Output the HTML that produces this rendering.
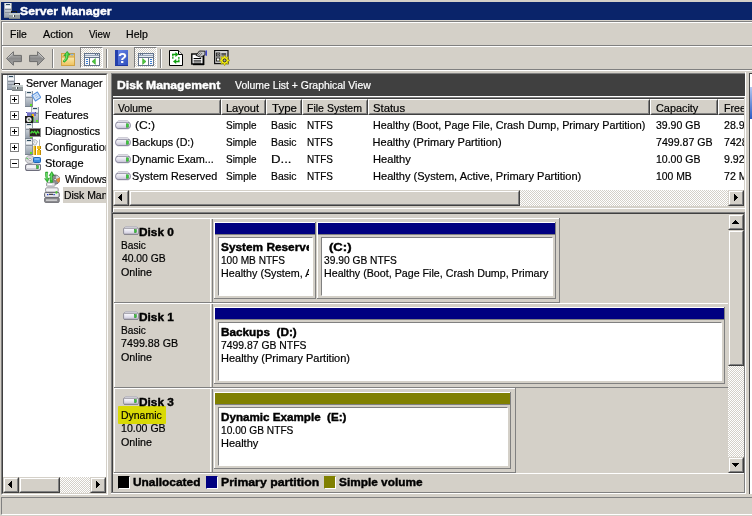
<!DOCTYPE html><html><head><meta charset="utf-8"><title>Server Manager</title><style>
html,body{margin:0;padding:0}
body{will-change:transform;width:752px;height:516px;overflow:hidden;background:#d4d0c8;position:relative;font-family:"Liberation Sans",sans-serif;font-size:11px;line-height:13px;color:#000}
div,span{position:absolute;box-sizing:border-box}
.t{white-space:pre;height:13px;line-height:13px;transform-origin:0 0;-webkit-text-stroke:0.2px currentColor}
.b{font-weight:bold;-webkit-text-stroke:0.4px currentColor}
.hl{background:#808080}.dk{background:#404040}.wh{background:#fff}
.raised{border:1px solid;border-color:#d4d0c8 #404040 #404040 #d4d0c8;background:#d4d0c8}
.raised:after{content:"";position:absolute;left:0;top:0;right:0;bottom:0;border:1px solid;border-color:#fff #808080 #808080 #fff}
.hdr{background:#d4d0c8;border:1px solid;border-color:#fff #404040 #404040 #fff;height:16px;top:99px}
.hdr:after{content:"";position:absolute;left:0;top:0;right:0;bottom:0;border:1px solid;border-color:#d4d0c8 #808080 #808080 #d4d0c8}
.dither{background-color:#fff;background-image:conic-gradient(#d4d0c8 25%,#fff 0 50%,#d4d0c8 0 75%,#fff 0);background-size:2px 2px}
</style></head><body><div style="left:1px;top:2px;width:751px;height:18px;background:#0a246a;"></div>
<span class="t b" style="left:19.9px;top:5px;transform:scaleX(1.108);color:#fff">Server Manager</span>
<svg style="position:absolute;left:4px;top:3px" width="16" height="16" viewBox="0 0 16 16" shape-rendering="crispEdges"><defs><linearGradient id="g1" x1="0" y1="0" x2="0" y2="1"><stop offset="0" stop-color="#e6eaee"/><stop offset="0.45" stop-color="#c3cad2"/><stop offset="1" stop-color="#8e99a6"/></linearGradient></defs><rect x="0" y="0" width="8" height="15" fill="url(#g1)"/><rect x="0" y="0" width="1" height="15" fill="#9aa3ad" opacity="0.8"/><rect x="7" y="0" width="1" height="15" fill="#7d8792" opacity="0.8"/><rect x="2" y="1" width="4" height="1" fill="#2c4a5c"/><rect x="1" y="3" width="6" height="2" fill="#f4f6f8"/><rect x="1" y="6" width="6" height="1" fill="#8a929c"/><rect x="0" y="14" width="8" height="1" fill="#78828e"/><rect x="1" y="9" width="6" height="1" fill="#8a929c"/><path d="M7.5 10 v-1.5 h5 v1.5" fill="none" stroke="#181818" stroke-width="1"/><rect x="5" y="10" width="11" height="6" fill="#949c9e"/><rect x="5" y="10" width="11" height="2" fill="#c2caca"/><rect x="5" y="15" width="11" height="1" fill="#7a8284"/><rect x="9" y="12" width="2" height="2" fill="#fff"/><rect x="10" y="12" width="1" height="2" fill="#3c4446"/></svg>
<div style="left:1px;top:21px;width:751px;height:1px;background:#808080;"></div>
<div style="left:1px;top:21px;width:1px;height:48px;background:#808080;"></div>
<div style="left:2px;top:22px;width:750px;height:1px;background:#fff;"></div>
<div style="left:2px;top:22px;width:1px;height:23px;background:#fff;"></div>
<div style="left:2px;top:47px;width:1px;height:22px;background:#fff;"></div>
<span class="t" style="left:9.7px;top:28px;transform:scaleX(0.950);">File</span>
<span class="t" style="left:43.0px;top:28px;transform:scaleX(0.983);">Action</span>
<span class="t" style="left:88.6px;top:28px;transform:scaleX(0.892);">View</span>
<span class="t" style="left:125.8px;top:28px;transform:scaleX(0.962);">Help</span>
<div style="left:2px;top:45px;width:750px;height:1px;background:#808080;"></div>
<div style="left:2px;top:46px;width:750px;height:1px;background:#fff;"></div>
<div style="left:2px;top:69px;width:750px;height:1px;background:#808080;"></div>
<div style="left:2px;top:70px;width:750px;height:1px;background:#fff;"></div>
<svg style="position:absolute;left:6px;top:51px" width="16" height="15" viewBox="0 0 16 15"><defs><linearGradient id="g2" x1="0" y1="0" x2="0" y2="1"><stop offset="0" stop-color="#c4c4c4"/><stop offset="0.5" stop-color="#8a8a8a"/><stop offset="1" stop-color="#a8a8a8"/></linearGradient></defs><g transform=""><path d="M0.6 7.5 L7.4 0.7 V4.4 H15.4 V10.6 H7.4 V14.3 Z" fill="url(#g2)" stroke="#6c6c6c" stroke-width="1" stroke-linejoin="round"/><path d="M1.8 7.3 L6.6 2.6" stroke="#d6d6d6" stroke-width="0.8"/></g></svg>
<svg style="position:absolute;left:29px;top:51px" width="16" height="15" viewBox="0 0 16 15"><defs><linearGradient id="g3" x1="0" y1="0" x2="0" y2="1"><stop offset="0" stop-color="#c4c4c4"/><stop offset="0.5" stop-color="#8a8a8a"/><stop offset="1" stop-color="#a8a8a8"/></linearGradient></defs><g transform="translate(16 0) scale(-1 1)"><path d="M0.6 7.5 L7.4 0.7 V4.4 H15.4 V10.6 H7.4 V14.3 Z" fill="url(#g3)" stroke="#6c6c6c" stroke-width="1" stroke-linejoin="round"/><path d="M1.8 7.3 L6.6 2.6" stroke="#d6d6d6" stroke-width="0.8"/></g></svg>
<div style="left:52px;top:49px;width:1px;height:19px;background:#808080;"></div>
<div style="left:53px;top:49px;width:1px;height:19px;background:#fff;"></div>
<svg style="position:absolute;left:61px;top:51px" width="15" height="16" viewBox="0 0 15 16"><defs><linearGradient id="g4" x1="0" y1="0" x2="0" y2="1"><stop offset="0" stop-color="#fae9b0"/><stop offset="1" stop-color="#efc25c"/></linearGradient></defs><rect x="0.5" y="2.5" width="13" height="12" fill="#ecca78" stroke="#cfa244"/><rect x="0.5" y="6" width="13" height="8.5" fill="url(#g4)" stroke="#cfa244"/><rect x="9.6" y="2.9" width="2.8" height="1.2" rx="0.6" fill="#9ccaf4" stroke="#4a86d0" stroke-width="0.4"/><path d="M2 10.2 C3.6 9.4 4.6 7.4 4.8 4.4 L2.8 4.8 L6.2 0.4 L9 4 L7.2 4 C7.2 7.6 5.8 9.8 3.2 11.2z" fill="#38cc38" stroke="#14961c" stroke-width="0.6"/><path d="M5.9 2 C6 5 5.4 8 3 10" stroke="#98f090" stroke-width="0.7" fill="none"/></svg>
<div class="dither" style="left:80px;top:47px;width:23px;height:21px;border:1px solid;border-color:#808080 #fff #fff #808080"></div>
<svg style="position:absolute;left:84px;top:53px" width="16" height="13" viewBox="0 0 16 13" shape-rendering="crispEdges"><g transform=""><rect x="0" y="0" width="16" height="13" fill="#64748c"/><rect x="1" y="1" width="14" height="1" fill="#dfe5ee"/><rect x="1" y="2" width="14" height="1" fill="#9aa8bc"/><rect x="11" y="1" width="1" height="1" fill="#64748c"/><rect x="13" y="1" width="1" height="1" fill="#64748c"/><rect x="1" y="3" width="14" height="1" fill="#e9edf3"/><rect x="1" y="5" width="4" height="7" fill="#f8fafc"/><rect x="6" y="5" width="9" height="7" fill="#ffffff"/><rect x="2" y="6" width="2" height="1" fill="#3a7ed6"/><rect x="2" y="8" width="2" height="1" fill="#3a7ed6"/><rect x="2" y="10" width="2" height="1" fill="#3a7ed6"/><path d="M11.4 5.6 L8 8.5 L11.4 11.4z" fill="#4cc83c" stroke="#2a9a22" stroke-width="0.5" shape-rendering="auto"/></g></svg>
<div style="left:106px;top:49px;width:1px;height:19px;background:#808080;"></div>
<div style="left:107px;top:49px;width:1px;height:19px;background:#fff;"></div>
<svg style="position:absolute;left:115px;top:50px" width="13" height="16" viewBox="0 0 13 16"><defs><linearGradient id="g5" x1="0" y1="0" x2="1" y2="1"><stop offset="0" stop-color="#6f8cec"/><stop offset="1" stop-color="#2c4cbc"/></linearGradient></defs><rect x="0" y="0" width="13" height="16" fill="url(#g5)"/><rect x="0" y="0" width="3" height="16" fill="#2440ac"/><rect x="0" y="15" width="13" height="1" fill="#2038a0"/><text x="8" y="13.4" font-family="Liberation Sans, sans-serif" font-size="14.5" font-weight="bold" fill="#8090c8" text-anchor="middle">?</text><text x="7.4" y="12.8" font-family="Liberation Sans, sans-serif" font-size="14.5" font-weight="bold" fill="#ffffff" text-anchor="middle">?</text></svg>
<div class="dither" style="left:134px;top:47px;width:23px;height:21px;border:1px solid;border-color:#808080 #fff #fff #808080"></div>
<svg style="position:absolute;left:138px;top:53px" width="16" height="13" viewBox="0 0 16 13" shape-rendering="crispEdges"><g transform="translate(16 0) scale(-1 1)"><rect x="0" y="0" width="16" height="13" fill="#64748c"/><rect x="1" y="1" width="14" height="1" fill="#dfe5ee"/><rect x="1" y="2" width="14" height="1" fill="#9aa8bc"/><rect x="11" y="1" width="1" height="1" fill="#64748c"/><rect x="13" y="1" width="1" height="1" fill="#64748c"/><rect x="1" y="3" width="14" height="1" fill="#e9edf3"/><rect x="1" y="5" width="4" height="7" fill="#f8fafc"/><rect x="6" y="5" width="9" height="7" fill="#ffffff"/><rect x="2" y="6" width="2" height="1" fill="#3a7ed6"/><rect x="2" y="8" width="2" height="1" fill="#3a7ed6"/><rect x="2" y="10" width="2" height="1" fill="#3a7ed6"/><path d="M11.4 5.6 L8 8.5 L11.4 11.4z" fill="#4cc83c" stroke="#2a9a22" stroke-width="0.5" shape-rendering="auto"/></g></svg>
<div style="left:160px;top:49px;width:1px;height:19px;background:#808080;"></div>
<div style="left:161px;top:49px;width:1px;height:19px;background:#fff;"></div>
<svg style="position:absolute;left:169px;top:50px" width="14" height="16" viewBox="0 0 14 16"><path d="M0.5 0.5 h9 l4 4 v11 h-13z" fill="#fff" stroke="#000"/><path d="M9.5 0.5 v4 h4" fill="#e8e8e8" stroke="#000"/><rect x="3" y="3.7" width="4" height="1.5" fill="#10a010"/><path d="M6.4 1.9 L9.6 4.4 L6.4 6.9z" fill="#10a010"/><rect x="3" y="5.2" width="1.6" height="1.2" fill="#10a010"/><rect x="3" y="7.2" width="1.6" height="1.4" fill="#10a010"/><rect x="7" y="10.8" width="3.6" height="1.5" fill="#10a010"/><path d="M7.2 9.1 L4 11.6 L7.2 14.1z" fill="#10a010"/><rect x="9" y="9.6" width="1.6" height="1.2" fill="#10a010"/><rect x="9" y="7.2" width="1.6" height="1.5" fill="#10a010"/></svg>
<svg style="position:absolute;left:191px;top:50px" width="16" height="16" viewBox="0 0 16 16"><rect x="0.8" y="4" width="11.4" height="10" fill="#fff" stroke="#000" stroke-width="1.4"/><rect x="12" y="6" width="1.4" height="9" fill="#000"/><rect x="2" y="14" width="11" height="1.2" fill="#000"/><rect x="2.6" y="8" width="7.6" height="1.1" fill="#000"/><rect x="2.6" y="10.4" width="7.6" height="1.1" fill="#000"/><rect x="2.6" y="12.6" width="7.6" height="0.9" fill="#000"/><path d="M5 5.4 L8.4 1 L14 1.2 L14 5 L9.6 7.2z" fill="#c6c6c6" stroke="#111" stroke-width="0.9"/><path d="M6.6 5.6 L9.4 2.4 M8.2 6.2 L11 3" stroke="#555" stroke-width="0.8"/><rect x="14.6" y="0.4" width="1.2" height="5.4" fill="#1c28d0"/></svg>
<svg style="position:absolute;left:214px;top:50px" width="17" height="16" viewBox="0 0 17 16"><rect x="0.6" y="0.6" width="13.4" height="13" fill="#c2c2c2" stroke="#111" stroke-width="1.2"/><rect x="1.4" y="1.4" width="11.8" height="1" fill="#efefef"/><rect x="2.4" y="3" width="3.4" height="3" fill="#fff" stroke="#111" stroke-width="0.8"/><path d="M3 3.6 l2.2 1.8 M5.2 3.6 l-2.2 1.8" stroke="#111" stroke-width="0.7"/><rect x="7.4" y="3.4" width="4.6" height="1.2" fill="#111"/><rect x="7.4" y="5.4" width="4.6" height="0.9" fill="#555"/><rect x="2.4" y="8" width="3.4" height="3" fill="#fff" stroke="#111" stroke-width="0.8"/><polygon points="10.60,5.00 11.86,7.35 14.42,6.58 13.65,9.14 16.00,10.40 13.65,11.66 14.42,14.22 11.86,13.45 10.60,15.80 9.34,13.45 6.78,14.22 7.55,11.66 5.20,10.40 7.55,9.14 6.78,6.58 9.34,7.35" fill="#f4ee10" stroke="#8a8200" stroke-width="0.5"/><circle cx="10.6" cy="10.4" r="1.5" fill="#b0b0a0" stroke="#222" stroke-width="1"/></svg>
<div style="left:1px;top:73px;width:107px;height:422px;background:#fff;border:1px solid;border-color:#808080 #fff #fff #808080"></div>
<div style="left:2px;top:74px;width:105px;height:420px;background:#fff;border:1px solid;border-color:#404040 #d4d0c8 #d4d0c8 #404040"></div>
<div style="left:3px;top:75px;width:103px;height:402px;overflow:hidden" id="tree">
<span class="t" style="left:23.0px;top:2px;transform:scaleX(0.971);">Server Manager</span>
<span class="t" style="left:42.1px;top:18px;transform:scaleX(0.937);">Roles</span>
<span class="t" style="left:42.0px;top:34px;transform:scaleX(1.000);">Features</span>
<span class="t" style="left:42.0px;top:50px;transform:scaleX(0.969);">Diagnostics</span>
<span class="t" style="left:42.0px;top:66px;transform:scaleX(1.010);">Configuration</span>
<span class="t" style="left:42.0px;top:82px;transform:scaleX(1.000);">Storage</span>
<span class="t" style="left:62.3px;top:98px;transform:scaleX(0.939);">Windows Server Backup</span>
<div style="left:60px;top:112px;width:60px;height:16px;background:#d4d0c8"></div>
<span class="t" style="left:61.4px;top:114px;transform:scaleX(0.948);">Disk Management</span>
</div>
<div style="left:10px;top:95px;width:9px;height:9px;border:1px solid #808080;background:#fff"></div>
<div style="left:12px;top:99px;width:5px;height:1px;background:#000;"></div>
<div style="left:14px;top:97px;width:1px;height:5px;background:#000;"></div>
<div style="left:10px;top:111px;width:9px;height:9px;border:1px solid #808080;background:#fff"></div>
<div style="left:12px;top:115px;width:5px;height:1px;background:#000;"></div>
<div style="left:14px;top:113px;width:1px;height:5px;background:#000;"></div>
<div style="left:10px;top:127px;width:9px;height:9px;border:1px solid #808080;background:#fff"></div>
<div style="left:12px;top:131px;width:5px;height:1px;background:#000;"></div>
<div style="left:14px;top:129px;width:1px;height:5px;background:#000;"></div>
<div style="left:10px;top:143px;width:9px;height:9px;border:1px solid #808080;background:#fff"></div>
<div style="left:12px;top:147px;width:5px;height:1px;background:#000;"></div>
<div style="left:14px;top:145px;width:1px;height:5px;background:#000;"></div>
<div style="left:10px;top:159px;width:9px;height:9px;border:1px solid #808080;background:#fff"></div>
<div style="left:12px;top:163px;width:5px;height:1px;background:#000;"></div>
<svg style="position:absolute;left:7px;top:75px" width="16" height="16" viewBox="0 0 16 16" shape-rendering="crispEdges"><defs><linearGradient id="g6" x1="0" y1="0" x2="0" y2="1"><stop offset="0" stop-color="#e6eaee"/><stop offset="0.45" stop-color="#c3cad2"/><stop offset="1" stop-color="#8e99a6"/></linearGradient></defs><rect x="0" y="0" width="8" height="15" fill="url(#g6)"/><rect x="0" y="0" width="1" height="15" fill="#9aa3ad" opacity="0.8"/><rect x="7" y="0" width="1" height="15" fill="#7d8792" opacity="0.8"/><rect x="2" y="1" width="4" height="1" fill="#2c4a5c"/><rect x="1" y="3" width="6" height="2" fill="#f4f6f8"/><rect x="1" y="6" width="6" height="1" fill="#8a929c"/><rect x="0" y="14" width="8" height="1" fill="#78828e"/><rect x="1" y="9" width="6" height="1" fill="#8a929c"/><path d="M7.5 10 v-1.5 h5 v1.5" fill="none" stroke="#181818" stroke-width="1"/><rect x="5" y="10" width="11" height="6" fill="#949c9e"/><rect x="5" y="10" width="11" height="2" fill="#c2caca"/><rect x="5" y="15" width="11" height="1" fill="#7a8284"/><rect x="9" y="12" width="2" height="2" fill="#fff"/><rect x="10" y="12" width="1" height="2" fill="#3c4446"/></svg>
<svg style="position:absolute;left:25px;top:91px" width="16" height="16" viewBox="0 0 16 16" shape-rendering="crispEdges"><defs><linearGradient id="g7" x1="0" y1="0" x2="0" y2="1"><stop offset="0" stop-color="#e6eaee"/><stop offset="0.45" stop-color="#c3cad2"/><stop offset="1" stop-color="#8e99a6"/></linearGradient></defs><rect x="0" y="0" width="8" height="16" fill="url(#g7)"/><rect x="0" y="0" width="1" height="16" fill="#9aa3ad" opacity="0.8"/><rect x="7" y="0" width="1" height="16" fill="#7d8792" opacity="0.8"/><rect x="2" y="1" width="4" height="1" fill="#2c4a5c"/><rect x="1" y="3" width="6" height="2" fill="#f4f6f8"/><rect x="1" y="6" width="6" height="1" fill="#8a929c"/><rect x="0" y="15" width="8" height="1" fill="#78828e"/><rect x="5" y="13" width="2" height="2" fill="#5ce020"/><g shape-rendering="auto"><path d="M7 4.4 L12.4 1 L15.8 6.4 L10.4 10 Z" fill="#d6e6fa" stroke="#5a92dc" stroke-width="1.1" stroke-linejoin="round"/><path d="M9.8 5.2 l2.6 -1.6 M10.8 6.8 l2.6 -1.6" stroke="#7aaae6" stroke-width="0.7"/></g></svg>
<svg style="position:absolute;left:25px;top:107px" width="16" height="16" viewBox="0 0 16 16" shape-rendering="crispEdges"><g transform="translate(6,0)"><defs><linearGradient id="g8" x1="0" y1="0" x2="0" y2="1"><stop offset="0" stop-color="#e6eaee"/><stop offset="0.45" stop-color="#c3cad2"/><stop offset="1" stop-color="#8e99a6"/></linearGradient></defs><rect x="0" y="0" width="8" height="16" fill="url(#g8)"/><rect x="0" y="0" width="1" height="16" fill="#9aa3ad" opacity="0.8"/><rect x="7" y="0" width="1" height="16" fill="#7d8792" opacity="0.8"/><rect x="2" y="1" width="4" height="1" fill="#2c4a5c"/><rect x="1" y="3" width="6" height="2" fill="#f4f6f8"/><rect x="1" y="6" width="6" height="1" fill="#8a929c"/><rect x="0" y="15" width="8" height="1" fill="#78828e"/><rect x="5" y="13" width="2" height="2" fill="#5ce020"/></g><rect x="2" y="5" width="9" height="4" fill="#7474c4"/><rect x="2" y="5" width="9" height="1" fill="#9a9ade"/><rect x="1" y="5" width="1" height="1" fill="#4a4aa0"/><rect x="10" y="5" width="1" height="1" fill="#4a4aa0"/><rect x="6" y="7" width="3" height="8" fill="#58a058"/><rect x="7" y="7" width="2" height="3" fill="#f0b020"/><rect x="0" y="9" width="8" height="7" fill="#1c1c1c"/><g shape-rendering="auto"><circle cx="4" cy="12.5" r="2.6" fill="#e8e8e8"/><circle cx="4" cy="12.5" r="0.9" fill="#555"/><path d="M4 12.5 L6.4 13.6 A2.6 2.6 0 0 1 4.5 15z" fill="#9ad08a"/></g></svg>
<svg style="position:absolute;left:25px;top:123px" width="16" height="16" viewBox="0 0 16 16" shape-rendering="crispEdges"><defs><linearGradient id="g9" x1="0" y1="0" x2="0" y2="1"><stop offset="0" stop-color="#e6eaee"/><stop offset="0.45" stop-color="#c3cad2"/><stop offset="1" stop-color="#8e99a6"/></linearGradient></defs><rect x="0" y="0" width="8" height="16" fill="url(#g9)"/><rect x="0" y="0" width="1" height="16" fill="#9aa3ad" opacity="0.8"/><rect x="7" y="0" width="1" height="16" fill="#7d8792" opacity="0.8"/><rect x="2" y="1" width="4" height="1" fill="#2c4a5c"/><rect x="1" y="3" width="6" height="2" fill="#f4f6f8"/><rect x="1" y="6" width="6" height="1" fill="#8a929c"/><rect x="0" y="15" width="8" height="1" fill="#78828e"/><rect x="5" y="13" width="2" height="2" fill="#5ce020"/><rect x="4" y="5" width="12" height="9" fill="#8e8e8e"/><rect x="5" y="6" width="10" height="7" fill="#2a2020"/><g shape-rendering="auto"><path d="M5.5 10.5 l1.5 -2 l1.5 1.2 l1.3 -1.4 l1.4 2.6 l1.4 -2.6 l1.6 2" fill="none" stroke="#48d838" stroke-width="1.3"/></g><rect x="5" y="14" width="2" height="1" fill="#5ce020"/></svg>
<svg style="position:absolute;left:25px;top:139px" width="16" height="16" viewBox="0 0 16 16" shape-rendering="crispEdges"><defs><linearGradient id="g10" x1="0" y1="0" x2="0" y2="1"><stop offset="0" stop-color="#e6eaee"/><stop offset="0.45" stop-color="#c3cad2"/><stop offset="1" stop-color="#8e99a6"/></linearGradient></defs><rect x="0" y="0" width="8" height="16" fill="url(#g10)"/><rect x="0" y="0" width="1" height="16" fill="#9aa3ad" opacity="0.8"/><rect x="7" y="0" width="1" height="16" fill="#7d8792" opacity="0.8"/><rect x="2" y="1" width="4" height="1" fill="#2c4a5c"/><rect x="1" y="3" width="6" height="2" fill="#f4f6f8"/><rect x="1" y="6" width="6" height="1" fill="#8a929c"/><rect x="0" y="15" width="8" height="1" fill="#78828e"/><rect x="5" y="13" width="2" height="2" fill="#5ce020"/><g shape-rendering="auto"><path d="M7.5 1.2 q3 -1.6 5 1.2 l-1.6 3.6 l-2 0.2 l-0.8 -1.6 l1.6 -1.4 q-1 -1.2 -2.2 -2z" fill="#eceff2" stroke="#9aa2aa" stroke-width="0.7"/><rect x="14" y="0.5" width="1" height="7" fill="#a8b0b8"/></g><rect x="8" y="7" width="3" height="9" fill="#f2c21c"/><rect x="10" y="7" width="1" height="9" fill="#c08a00"/><rect x="8" y="7" width="1" height="9" fill="#fbe27a"/><rect x="12" y="7" width="4" height="3" fill="#f2c21c"/><rect x="13" y="10" width="2" height="1" fill="#d09a00"/><rect x="12" y="11" width="4" height="5" fill="#f2c21c"/><rect x="15" y="7" width="1" height="3" fill="#c08a00"/><rect x="15" y="11" width="1" height="5" fill="#c08a00"/></svg>
<svg style="position:absolute;left:25px;top:155px" width="16" height="16" viewBox="0 0 16 16"><ellipse cx="5" cy="4.5" rx="4.6" ry="4" fill="#d8d8dc" stroke="#9a9aa2" stroke-width="0.8"/><ellipse cx="5" cy="4.5" rx="1.3" ry="1.1" fill="#fff" stroke="#888" stroke-width="0.5"/><path d="M1.2 3 l2 1" stroke="#4cc84c" stroke-width="1"/><rect x="8.5" y="2.5" width="7" height="5" rx="0.8" fill="#3a8fe2" stroke="#1e62b4"/><rect x="9.5" y="3.3" width="5" height="1.4" fill="#8cc4f6"/><rect x="0.6" y="9.2" width="15" height="6.2" rx="2" fill="#f0f0f4" stroke="#6e6e7c" stroke-width="1.1"/><rect x="2" y="13.4" width="12" height="1" fill="#b8b8c4"/><rect x="11.6" y="10.6" width="1.8" height="3" fill="#3cc43c" stroke="#207820" stroke-width="0.5"/></svg>
<svg style="position:absolute;left:44px;top:171px" width="16" height="16" viewBox="0 0 16 16"><circle cx="11.2" cy="8.6" r="4.6" fill="#8e8e92" stroke="#55555a" stroke-width="0.8"/><path d="M11.2 8.6 L15.4 6.6 A4.6 4.6 0 0 1 14.6 11.8z" fill="#e08a3a"/><path d="M11.2 8.6 L12.6 4.2 A4.6 4.6 0 0 1 15.4 6.6z" fill="#d8d8dc"/><circle cx="11.2" cy="8.6" r="1.2" fill="#eee" stroke="#444" stroke-width="0.5"/><rect x="2.5" y="11.6" width="8.5" height="3.6" rx="0.8" fill="#e4e4e8" stroke="#8a8a92" stroke-width="0.8"/><rect x="4" y="13" width="4" height="1" fill="#fff"/><path d="M1.6 1 C1.2 4 1.6 6 2.4 8 L0.6 7.6 L3.4 11.4 L5.4 7 L3.9 7.6 C3.2 5.6 3.2 3.4 3.8 1z" fill="#34c034" stroke="#168a16" stroke-width="0.5"/><path d="M6.4 11.6 C5.6 8.6 6 6.2 6.8 4.2 L5 4.8 L7.8 0.6 L10.2 4.6 L8.6 4.2 C8 6.2 8 8.6 8.8 11.2z" fill="#34c034" stroke="#168a16" stroke-width="0.5"/><path d="M7.4 2.4 L7.2 9" stroke="#8cf08c" stroke-width="0.7"/><path d="M2.6 2 L3 8.6" stroke="#8cf08c" stroke-width="0.7"/></svg>
<svg style="position:absolute;left:44px;top:187px" width="16" height="16" viewBox="0 0 16 16"><rect x="1.6" y="0.8" width="12.6" height="4.4" rx="1.2" fill="#f2f2f4" stroke="#8e8e96" stroke-width="0.9"/><rect x="0.6" y="5.4" width="14.6" height="5" rx="1.2" fill="#e6e6ea" stroke="#62626c" stroke-width="1"/><rect x="3" y="7" width="1.4" height="1.2" fill="#2038c8"/><rect x="9.4" y="7" width="1.4" height="1.2" fill="#2038c8"/><rect x="5" y="6.8" width="4" height="1" fill="#222"/><rect x="11.6" y="4.2" width="1.6" height="2.4" fill="#48d028"/><rect x="0.6" y="10.8" width="14.6" height="4.6" rx="1" fill="#8e8e92" stroke="#6a6a70" stroke-width="0.9"/><rect x="2" y="12.6" width="11" height="1" fill="#f4f4f4"/></svg>
<div class="dither" style="left:3px;top:477px;width:103px;height:16px"></div>
<div class="raised" style="left:3px;top:477px;width:16px;height:16px"></div>
<div style="left:8px;top:484px;width:1px;height:1px;background:#000;"></div>
<div style="left:9px;top:483px;width:1px;height:3px;background:#000;"></div>
<div style="left:10px;top:482px;width:1px;height:5px;background:#000;"></div>
<div style="left:11px;top:481px;width:1px;height:7px;background:#000;"></div>
<div class="raised" style="left:90px;top:477px;width:16px;height:16px"></div>
<div style="left:99px;top:484px;width:1px;height:1px;background:#000;"></div>
<div style="left:98px;top:483px;width:1px;height:3px;background:#000;"></div>
<div style="left:97px;top:482px;width:1px;height:5px;background:#000;"></div>
<div style="left:96px;top:481px;width:1px;height:7px;background:#000;"></div>
<div class="raised" style="left:19px;top:477px;width:41px;height:16px"></div>
<div style="left:111px;top:73px;width:634px;height:23px;background:#404040;border-left:1px solid #808080;border-top:1px solid #808080"></div>
<span class="t b" style="left:116.6px;top:79px;transform:scaleX(1.105);color:#fff">Disk Management</span>
<span class="t" style="left:235.4px;top:79px;transform:scaleX(0.948);color:#fff">Volume List + Graphical View</span>
<div style="left:745px;top:72px;width:1px;height:422px;background:#fff;"></div>
<div style="left:112px;top:96px;width:633px;height:1px;background:#fff;"></div>
<div style="left:111px;top:97px;width:634px;height:110px;background:#fff;border:1px solid;border-color:#808080 #d4d0c8 #d4d0c8 #808080"></div>
<div style="left:112px;top:98px;width:1px;height:108px;background:#404040;"></div>
<div style="left:113px;top:98px;width:631px;height:1px;background:#404040;"></div>
<div style="left:113px;top:99px;width:631px;height:91px;overflow:hidden;background:#fff" id="list">
<div class="hdr" style="left:0px;top:0;width:108px"></div>
<span class="t" style="left:5.4px;top:3px;transform:scaleX(0.933);">Volume</span>
<div class="hdr" style="left:108px;top:0;width:45px"></div>
<span class="t" style="left:113.0px;top:3px;transform:scaleX(1.000);">Layout</span>
<div class="hdr" style="left:153px;top:0;width:36px"></div>
<span class="t" style="left:158.6px;top:3px;transform:scaleX(1.045);">Type</span>
<div class="hdr" style="left:189px;top:0;width:66px"></div>
<span class="t" style="left:194.0px;top:3px;transform:scaleX(0.957);">File System</span>
<div class="hdr" style="left:255px;top:0;width:282px"></div>
<span class="t" style="left:259.6px;top:3px;transform:scaleX(1.027);">Status</span>
<div class="hdr" style="left:537px;top:0;width:68px"></div>
<span class="t" style="left:543.0px;top:3px;transform:scaleX(0.988);">Capacity</span>
<div class="hdr" style="left:605px;top:0;width:82px"></div>
<span class="t" style="left:610.5px;top:3px;transform:scaleX(0.965);">Free Space</span>
<span class="t" style="left:21.7px;top:20px;transform:scaleX(1.094);">(C:)</span>
<span class="t" style="left:113.1px;top:20px;transform:scaleX(0.906);">Simple</span>
<span class="t" style="left:158.1px;top:20px;transform:scaleX(0.944);">Basic</span>
<span class="t" style="left:194.1px;top:20px;transform:scaleX(0.904);">NTFS</span>
<span class="t" style="left:259.8px;top:20px;transform:scaleX(0.979);">Healthy (Boot, Page File, Crash Dump, Primary Partition)</span>
<span class="t" style="left:543.0px;top:20px;transform:scaleX(0.956);">39.90 GB</span>
<span class="t" style="left:610.5px;top:20px;transform:scaleX(0.965);">28.97 GB</span>
<svg style="position:absolute;left:2px;top:21px" width="16" height="10" viewBox="0 0 16 10"><defs><linearGradient id="g11" x1="0" y1="0" x2="0" y2="1"><stop offset="0" stop-color="#fbfbfd"/><stop offset="0.55" stop-color="#e2e0ec"/><stop offset="1" stop-color="#c2c0d2"/></linearGradient></defs><path d="M3.4 0.5 h9.2 l2.4 2.4 h-14z" fill="#f1f1f6" stroke="#b4b2c0" stroke-width="0.6"/><rect x="0.6" y="2.3" width="14.8" height="6.2" rx="2.6" fill="url(#g11)" stroke="#84829a" stroke-width="0.9"/><rect x="2.4" y="8.5" width="11.2" height="0.8" fill="#8a889c" opacity="0.6"/><rect x="11.4" y="3.8" width="2" height="3.4" fill="#38d038" stroke="#1e8a1e" stroke-width="0.5"/></svg>
<span class="t" style="left:19.2px;top:37px;transform:scaleX(0.974);">Backups (D:)</span>
<span class="t" style="left:113.1px;top:37px;transform:scaleX(0.906);">Simple</span>
<span class="t" style="left:158.1px;top:37px;transform:scaleX(0.944);">Basic</span>
<span class="t" style="left:194.1px;top:37px;transform:scaleX(0.904);">NTFS</span>
<span class="t" style="left:259.6px;top:37px;transform:scaleX(1.000);">Healthy (Primary Partition)</span>
<span class="t" style="left:543.0px;top:37px;transform:scaleX(0.965);">7499.87 GB</span>
<span class="t" style="left:610.5px;top:37px;transform:scaleX(0.965);">7428.63 GB</span>
<svg style="position:absolute;left:2px;top:38px" width="16" height="10" viewBox="0 0 16 10"><defs><linearGradient id="g12" x1="0" y1="0" x2="0" y2="1"><stop offset="0" stop-color="#fbfbfd"/><stop offset="0.55" stop-color="#e2e0ec"/><stop offset="1" stop-color="#c2c0d2"/></linearGradient></defs><path d="M3.4 0.5 h9.2 l2.4 2.4 h-14z" fill="#f1f1f6" stroke="#b4b2c0" stroke-width="0.6"/><rect x="0.6" y="2.3" width="14.8" height="6.2" rx="2.6" fill="url(#g12)" stroke="#84829a" stroke-width="0.9"/><rect x="2.4" y="8.5" width="11.2" height="0.8" fill="#8a889c" opacity="0.6"/><rect x="11.4" y="3.8" width="2" height="3.4" fill="#38d038" stroke="#1e8a1e" stroke-width="0.5"/></svg>
<span class="t" style="left:19.2px;top:54px;transform:scaleX(0.985);">Dynamic Exam...</span>
<span class="t" style="left:113.1px;top:54px;transform:scaleX(0.906);">Simple</span>
<span class="t" style="left:157.8px;top:54px;transform:scaleX(1.200);">D...</span>
<span class="t" style="left:194.1px;top:54px;transform:scaleX(0.904);">NTFS</span>
<span class="t" style="left:259.6px;top:54px;transform:scaleX(1.011);">Healthy</span>
<span class="t" style="left:543.0px;top:54px;transform:scaleX(0.956);">10.00 GB</span>
<span class="t" style="left:610.5px;top:54px;transform:scaleX(0.965);">9.92 GB</span>
<svg style="position:absolute;left:2px;top:55px" width="16" height="10" viewBox="0 0 16 10"><defs><linearGradient id="g13" x1="0" y1="0" x2="0" y2="1"><stop offset="0" stop-color="#fbfbfd"/><stop offset="0.55" stop-color="#e2e0ec"/><stop offset="1" stop-color="#c2c0d2"/></linearGradient></defs><path d="M3.4 0.5 h9.2 l2.4 2.4 h-14z" fill="#f1f1f6" stroke="#b4b2c0" stroke-width="0.6"/><rect x="0.6" y="2.3" width="14.8" height="6.2" rx="2.6" fill="url(#g13)" stroke="#84829a" stroke-width="0.9"/><rect x="2.4" y="8.5" width="11.2" height="0.8" fill="#8a889c" opacity="0.6"/><rect x="11.4" y="3.8" width="2" height="3.4" fill="#38d038" stroke="#1e8a1e" stroke-width="0.5"/></svg>
<span class="t" style="left:19.2px;top:71px;transform:scaleX(0.981);">System Reserved</span>
<span class="t" style="left:113.1px;top:71px;transform:scaleX(0.906);">Simple</span>
<span class="t" style="left:158.1px;top:71px;transform:scaleX(0.944);">Basic</span>
<span class="t" style="left:194.1px;top:71px;transform:scaleX(0.904);">NTFS</span>
<span class="t" style="left:259.6px;top:71px;transform:scaleX(1.005);">Healthy (System, Active, Primary Partition)</span>
<span class="t" style="left:543.1px;top:71px;transform:scaleX(0.944);">100 MB</span>
<span class="t" style="left:610.5px;top:71px;transform:scaleX(0.965);">72 MB</span>
<svg style="position:absolute;left:2px;top:72px" width="16" height="10" viewBox="0 0 16 10"><defs><linearGradient id="g14" x1="0" y1="0" x2="0" y2="1"><stop offset="0" stop-color="#fbfbfd"/><stop offset="0.55" stop-color="#e2e0ec"/><stop offset="1" stop-color="#c2c0d2"/></linearGradient></defs><path d="M3.4 0.5 h9.2 l2.4 2.4 h-14z" fill="#f1f1f6" stroke="#b4b2c0" stroke-width="0.6"/><rect x="0.6" y="2.3" width="14.8" height="6.2" rx="2.6" fill="url(#g14)" stroke="#84829a" stroke-width="0.9"/><rect x="2.4" y="8.5" width="11.2" height="0.8" fill="#8a889c" opacity="0.6"/><rect x="11.4" y="3.8" width="2" height="3.4" fill="#38d038" stroke="#1e8a1e" stroke-width="0.5"/></svg>
</div>
<div class="dither" style="left:113px;top:190px;width:631px;height:16px"></div>
<div class="raised" style="left:113px;top:190px;width:16px;height:16px"></div>
<div style="left:118px;top:197px;width:1px;height:1px;background:#000;"></div>
<div style="left:119px;top:196px;width:1px;height:3px;background:#000;"></div>
<div style="left:120px;top:195px;width:1px;height:5px;background:#000;"></div>
<div style="left:121px;top:194px;width:1px;height:7px;background:#000;"></div>
<div class="raised" style="left:728px;top:190px;width:16px;height:16px"></div>
<div style="left:737px;top:197px;width:1px;height:1px;background:#000;"></div>
<div style="left:736px;top:196px;width:1px;height:3px;background:#000;"></div>
<div style="left:735px;top:195px;width:1px;height:5px;background:#000;"></div>
<div style="left:734px;top:194px;width:1px;height:7px;background:#000;"></div>
<div class="raised" style="left:129px;top:190px;width:391px;height:16px"></div>
<div style="left:111px;top:73px;width:1px;height:420px;background:#808080;"></div>
<div style="left:112px;top:74px;width:1px;height:419px;background:#404040;"></div>
<div style="left:113px;top:208px;width:632px;height:1px;background:#fff;"></div>
<div style="left:113px;top:208px;width:1px;height:4px;background:#fff;"></div>
<div style="left:111px;top:212px;width:634px;height:281px;background:#d4d0c8;border:1px solid;border-color:#808080 #808080 #808080 #808080"></div>
<div style="left:112px;top:213px;width:632px;height:1px;background:#404040;"></div>
<div style="left:112px;top:213px;width:1px;height:279px;background:#404040;"></div>
<div style="left:111px;top:493px;width:635px;height:1px;background:#fff;"></div>
<div style="left:114px;top:218px;width:445px;height:1px;background:#fff;"></div>
<div style="left:114px;top:218px;width:1px;height:84px;background:#fff;"></div>
<div style="left:114px;top:302px;width:446px;height:1px;background:#808080;"></div>
<div style="left:559px;top:218px;width:1px;height:85px;background:#808080;"></div>
<div style="left:210px;top:219px;width:1px;height:83px;background:#fff;"></div>
<div style="left:212px;top:219px;width:1px;height:83px;background:#808080;"></div>
<svg style="position:absolute;left:123px;top:226px" width="16" height="9" viewBox="0 0 16 9"><defs><linearGradient id="g15" x1="0" y1="0" x2="0" y2="1"><stop offset="0" stop-color="#ffffff"/><stop offset="0.5" stop-color="#e6e4f0"/><stop offset="1" stop-color="#cac8d8"/></linearGradient></defs><path d="M2.5 0.6 h11 l1.8 2 h-14.6z" fill="#efeff5" stroke="#9a98a6" stroke-width="0.6"/><rect x="0.6" y="2.2" width="14.8" height="6" rx="0.8" fill="url(#g15)" stroke="#84828e" stroke-width="0.9"/><rect x="1" y="8.3" width="14" height="0.7" fill="#76747e" opacity="0.8"/><rect x="11.5" y="3.6" width="1.8" height="3" fill="#38c838" stroke="#1e7e1e" stroke-width="0.5"/></svg>
<span class="t b" style="left:138.9px;top:226px;transform:scaleX(1.074);">Disk 0</span>
<span class="t" style="left:121.1px;top:239px;transform:scaleX(0.920);">Basic</span>
<span class="t" style="left:122.0px;top:252px;transform:scaleX(0.940);">40.00 GB</span>
<span class="t" style="left:121.0px;top:266px;transform:scaleX(0.975);">Online</span>
<div style="left:214px;top:222px;width:101px;height:1px;background:#fff;"></div>
<div style="left:214px;top:222px;width:1px;height:76px;background:#fff;"></div>
<div style="left:215px;top:223px;width:100px;height:11px;background:#000080;"></div>
<div style="left:215px;top:234px;width:100px;height:1px;background:#808080;"></div>
<div style="left:315px;top:222px;width:1px;height:77px;background:#808080;"></div>
<div style="left:214px;top:298px;width:102px;height:1px;background:#808080;"></div>
<div style="left:218px;top:237px;width:95px;height:59px;background:#fff;border:1px solid;border-color:#808080 #fff #fff #808080;overflow:hidden"></div>
<div style="left:219px;top:238px;width:90px;height:57px;overflow:hidden">
<span class="t b" style="left:2.2px;top:3px;transform:scaleX(1.076);">System Reserved</span>
<span class="t" style="left:2.1px;top:16px;transform:scaleX(0.919);">100 MB NTFS</span>
<span class="t" style="left:2.3px;top:29px;transform:scaleX(0.976);">Healthy (System, Active, Primary Partition)</span>
</div>
<div style="left:317px;top:222px;width:238px;height:1px;background:#fff;"></div>
<div style="left:317px;top:222px;width:1px;height:76px;background:#fff;"></div>
<div style="left:318px;top:223px;width:237px;height:11px;background:#000080;"></div>
<div style="left:318px;top:234px;width:237px;height:1px;background:#808080;"></div>
<div style="left:555px;top:222px;width:1px;height:77px;background:#808080;"></div>
<div style="left:317px;top:298px;width:239px;height:1px;background:#808080;"></div>
<div style="left:321px;top:237px;width:232px;height:59px;background:#fff;border:1px solid;border-color:#808080 #fff #fff #808080;overflow:hidden"></div>
<div style="left:322px;top:238px;width:227px;height:57px;overflow:hidden">
<span class="t b" style="left:7.4px;top:3px;transform:scaleX(1.188);">(C:)</span>
<span class="t" style="left:1.7px;top:16px;transform:scaleX(0.931);">39.90 GB NTFS</span>
<span class="t" style="left:1.6px;top:29px;transform:scaleX(0.971);">Healthy (Boot, Page File, Crash Dump, Primary</span>
</div>
<div style="left:114px;top:303px;width:614px;height:1px;background:#fff;"></div>
<div style="left:114px;top:303px;width:1px;height:84px;background:#fff;"></div>
<div style="left:114px;top:387px;width:615px;height:1px;background:#808080;"></div>
<div style="left:728px;top:303px;width:1px;height:85px;background:#808080;"></div>
<div style="left:210px;top:304px;width:1px;height:83px;background:#fff;"></div>
<div style="left:212px;top:304px;width:1px;height:83px;background:#808080;"></div>
<svg style="position:absolute;left:123px;top:311px" width="16" height="9" viewBox="0 0 16 9"><defs><linearGradient id="g16" x1="0" y1="0" x2="0" y2="1"><stop offset="0" stop-color="#ffffff"/><stop offset="0.5" stop-color="#e6e4f0"/><stop offset="1" stop-color="#cac8d8"/></linearGradient></defs><path d="M2.5 0.6 h11 l1.8 2 h-14.6z" fill="#efeff5" stroke="#9a98a6" stroke-width="0.6"/><rect x="0.6" y="2.2" width="14.8" height="6" rx="0.8" fill="url(#g16)" stroke="#84828e" stroke-width="0.9"/><rect x="1" y="8.3" width="14" height="0.7" fill="#76747e" opacity="0.8"/><rect x="11.5" y="3.6" width="1.8" height="3" fill="#38c838" stroke="#1e7e1e" stroke-width="0.5"/></svg>
<span class="t b" style="left:138.9px;top:311px;transform:scaleX(1.074);">Disk 1</span>
<span class="t" style="left:121.1px;top:324px;transform:scaleX(0.920);">Basic</span>
<span class="t" style="left:121.0px;top:337px;transform:scaleX(0.974);">7499.88 GB</span>
<span class="t" style="left:121.0px;top:351px;transform:scaleX(0.975);">Online</span>
<div style="left:214px;top:307px;width:510px;height:1px;background:#fff;"></div>
<div style="left:214px;top:307px;width:1px;height:76px;background:#fff;"></div>
<div style="left:215px;top:308px;width:509px;height:11px;background:#000080;"></div>
<div style="left:215px;top:319px;width:509px;height:1px;background:#808080;"></div>
<div style="left:724px;top:307px;width:1px;height:77px;background:#808080;"></div>
<div style="left:214px;top:383px;width:511px;height:1px;background:#808080;"></div>
<div style="left:218px;top:322px;width:504px;height:59px;background:#fff;border:1px solid;border-color:#808080 #fff #fff #808080;overflow:hidden"></div>
<div style="left:219px;top:323px;width:499px;height:57px;overflow:hidden">
<span class="t b" style="left:1.9px;top:3px;transform:scaleX(1.069);">Backups  (D:)</span>
<span class="t" style="left:2.1px;top:16px;transform:scaleX(0.944);">7499.87 GB NTFS</span>
<span class="t" style="left:2.0px;top:29px;transform:scaleX(1.000);">Healthy (Primary Partition)</span>
</div>
<div style="left:114px;top:388px;width:401px;height:1px;background:#fff;"></div>
<div style="left:114px;top:388px;width:1px;height:84px;background:#fff;"></div>
<div style="left:114px;top:472px;width:402px;height:1px;background:#808080;"></div>
<div style="left:515px;top:388px;width:1px;height:85px;background:#808080;"></div>
<div style="left:210px;top:389px;width:1px;height:83px;background:#fff;"></div>
<div style="left:212px;top:389px;width:1px;height:83px;background:#808080;"></div>
<svg style="position:absolute;left:123px;top:396px" width="16" height="9" viewBox="0 0 16 9"><defs><linearGradient id="g17" x1="0" y1="0" x2="0" y2="1"><stop offset="0" stop-color="#ffffff"/><stop offset="0.5" stop-color="#e6e4f0"/><stop offset="1" stop-color="#cac8d8"/></linearGradient></defs><path d="M2.5 0.6 h11 l1.8 2 h-14.6z" fill="#efeff5" stroke="#9a98a6" stroke-width="0.6"/><rect x="0.6" y="2.2" width="14.8" height="6" rx="0.8" fill="url(#g17)" stroke="#84828e" stroke-width="0.9"/><rect x="1" y="8.3" width="14" height="0.7" fill="#76747e" opacity="0.8"/><rect x="11.5" y="3.6" width="1.8" height="3" fill="#38c838" stroke="#1e7e1e" stroke-width="0.5"/></svg>
<div style="left:118px;top:406px;width:48px;height:18px;background:#d9d906;border-radius:1px"></div>
<span class="t b" style="left:138.9px;top:396px;transform:scaleX(1.074);">Disk 3</span>
<span class="t" style="left:121.0px;top:409px;transform:scaleX(0.951);">Dynamic</span>
<span class="t" style="left:121.0px;top:422px;transform:scaleX(0.961);">10.00 GB</span>
<span class="t" style="left:121.0px;top:436px;transform:scaleX(0.975);">Online</span>
<div style="left:214px;top:392px;width:296px;height:1px;background:#fff;"></div>
<div style="left:214px;top:392px;width:1px;height:76px;background:#fff;"></div>
<div style="left:215px;top:393px;width:295px;height:11px;background:#808000;"></div>
<div style="left:215px;top:404px;width:295px;height:1px;background:#808080;"></div>
<div style="left:510px;top:392px;width:1px;height:77px;background:#808080;"></div>
<div style="left:214px;top:468px;width:297px;height:1px;background:#808080;"></div>
<div style="left:218px;top:407px;width:290px;height:59px;background:#fff;border:1px solid;border-color:#808080 #fff #fff #808080;overflow:hidden"></div>
<div style="left:219px;top:408px;width:285px;height:57px;overflow:hidden">
<span class="t b" style="left:1.9px;top:3px;transform:scaleX(1.058);">Dynamic Example  (E:)</span>
<span class="t" style="left:2.1px;top:16px;transform:scaleX(0.925);">10.00 GB NTFS</span>
<span class="t" style="left:2.0px;top:29px;transform:scaleX(1.000);">Healthy</span>
</div>
<div class="dither" style="left:728px;top:214px;width:16px;height:259px"></div>
<div class="raised" style="left:728px;top:214px;width:16px;height:16px"></div>
<div style="left:735px;top:220px;width:1px;height:1px;background:#000;"></div>
<div style="left:734px;top:221px;width:3px;height:1px;background:#000;"></div>
<div style="left:733px;top:222px;width:5px;height:1px;background:#000;"></div>
<div style="left:732px;top:223px;width:7px;height:1px;background:#000;"></div>
<div class="raised" style="left:728px;top:457px;width:16px;height:16px"></div>
<div style="left:735px;top:466px;width:1px;height:1px;background:#000;"></div>
<div style="left:734px;top:465px;width:3px;height:1px;background:#000;"></div>
<div style="left:733px;top:464px;width:5px;height:1px;background:#000;"></div>
<div style="left:732px;top:463px;width:7px;height:1px;background:#000;"></div>
<div class="raised" style="left:728px;top:230px;width:16px;height:136px"></div>
<div style="left:113px;top:473px;width:631px;height:1px;background:#fff;"></div>
<div style="left:118px;top:476px;width:12px;height:13px;background:#000;border:1px solid;border-color:#000 #fff #fff #000"></div>
<span class="t b" style="left:132.9px;top:476px;transform:scaleX(1.082);">Unallocated</span>
<div style="left:206px;top:476px;width:12px;height:13px;background:#000080;border:1px solid;border-color:#000080 #fff #fff #000080"></div>
<span class="t b" style="left:220.9px;top:476px;transform:scaleX(1.116);">Primary partition</span>
<div style="left:324px;top:476px;width:12px;height:13px;background:#808000;border:1px solid;border-color:#808000 #fff #fff #808000"></div>
<span class="t b" style="left:338.9px;top:476px;transform:scaleX(1.076);">Simple volume</span>
<div style="left:1px;top:497px;width:761px;height:18px;background:#d4d0c8;border:1px solid;border-color:#808080 #fff #fff #808080"></div>
<div style="left:749px;top:73px;width:1px;height:421px;background:#484848;"></div>
<div style="left:750px;top:73px;width:2px;height:1px;background:#404040;"></div>
<div style="left:750px;top:74px;width:2px;height:420px;background:#fff;"></div>
<div style="left:750px;top:87px;width:2px;height:32px;background:;background:linear-gradient(#b4c8f0,#2a5ac4)"></div></body></html>
